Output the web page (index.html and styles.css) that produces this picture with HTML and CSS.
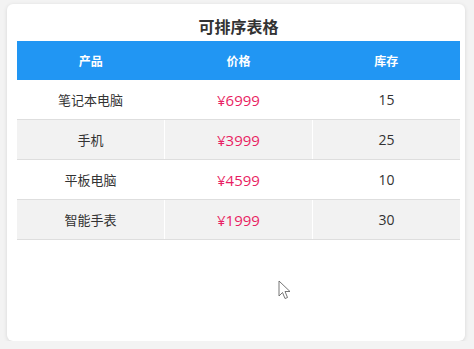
FILE: index.html
```html
<!DOCTYPE html>
<html lang="zh-CN">
<head>
  <meta charset="UTF-8" />
  <meta name="viewport" content="width=device-width, initial-scale=1.0"/>
  <title>可排序表格</title>
  <link rel="stylesheet" href="styles.css">
</head>
<body>

  <div id="card">
    <h2>可排序表格</h2>
    <table id="products">
      <thead>
        <tr>
          <th>产品</th>
          <th>价格</th>
          <th>库存</th>
        </tr>
      </thead>
      <tbody>
        <tr>
          <td>笔记本电脑</td>
          <td class="price">¥6999</td>
          <td class="stock">15</td>
        </tr>
        <tr>
          <td>手机</td>
          <td class="price">¥3999</td>
          <td class="stock">25</td>
        </tr>
        <tr>
          <td>平板电脑</td>
          <td class="price">¥4599</td>
          <td class="stock">10</td>
        </tr>
        <tr>
          <td>智能手表</td>
          <td class="price">¥1999</td>
          <td class="stock">30</td>
        </tr>
      </tbody>
    </table>

    <svg class="cursor" width="14" height="20" viewBox="0 0 14 20">
      <path d="M1 1 L1 16 L4.5 12.5 L7 18.5 L9.5 17.5 L7 11.5 L12 11.5 Z" fill="#fff" stroke="#666" stroke-width="0.9" stroke-linejoin="round"/>
    </svg>
  </div>

</body>
</html>
```

FILE: styles.css
```css
body {
  margin: 0;
  padding: 4px 0 0 7px;
  font-family: "Open Sans", "Noto Sans CJK SC", sans-serif;
  background-color: #f3f3f3;
  color: #333;
}

#card {
  position: relative;
  box-sizing: border-box;
  width: 458px;
  height: 337px;
  padding: 0 5px 0 10px;
  background: #fff;
  border-radius: 6px;
  box-shadow: 0 1px 4px rgba(0, 0, 0, 0.12);
}

h2 {
  margin: 0;
  padding: 14px 0 5px;
  font-size: 16px;
  line-height: 18px;
  font-weight: bold;
  text-align: center;
  color: #333;
}

#products {
  width: 100%;
  border-collapse: collapse;
  table-layout: fixed;
}

#products th {
  background-color: #2196f3;
  color: white;
  font-size: 12px;
  font-weight: bold;
  height: 39px;
  padding: 0;
}

#products td {
  height: 39px;
  padding: 0;
  font-size: 13px;
  text-align: center;
  border-bottom: 1px solid #dedede;
}

#products td + td {
  border-left: 1px solid #fff;
}

#products tbody tr:nth-child(even) td {
  background-color: #f2f2f2;
}

#products .price {
  color: #e91e63;
  font-size: 15px;
}

#products .stock {
  font-size: 14px;
}

.cursor {
  position: absolute;
  left: 271px;
  top: 276px;
}
```
